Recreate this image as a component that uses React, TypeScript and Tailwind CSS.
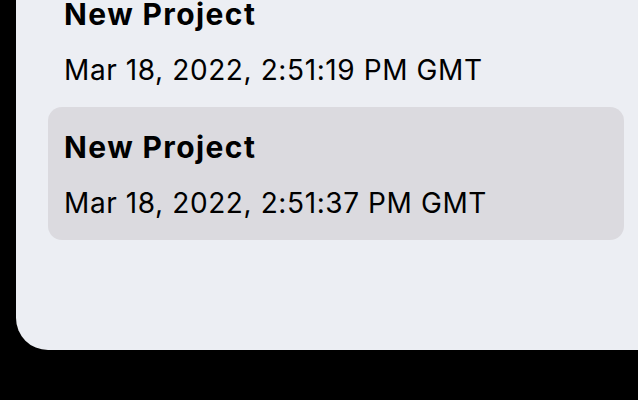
import React from "react";

type Project = {
  name: string;
  date: string;
  selected?: boolean;
};

const projects: Project[] = [
  { name: "New Project", date: "Mar 18, 2022, 2:51:19 PM GMT" },
  { name: "New Project", date: "Mar 18, 2022, 2:51:37 PM GMT", selected: true },
];

export default function App() {
  return (
    <div
      className="w-[638px] h-[400px] bg-black overflow-hidden"
      style={{ fontFamily: "Inter, 'Noto Sans', sans-serif" }}
    >
      <div className="ml-4 h-[350px] bg-[#eceef3] rounded-bl-[32px] pl-8 pr-[14px] flex flex-col">
        <div className="-mt-[26px] flex flex-col">
          {projects.map((p, i) => (
            <div
              key={i}
              className={`h-[133px] rounded-[14px] px-4 pt-[22px] flex flex-col gap-[21px] text-black ${
                p.selected ? "bg-[#dbdadf]" : ""
              }`}
            >
              <div className="text-[30px] leading-[36px] font-bold tracking-[1.4px]">{p.name}</div>
              <div className="text-[28px] leading-[34px] tracking-[0.6px]">{p.date}</div>
            </div>
          ))}
        </div>
      </div>
    </div>
  );
}
